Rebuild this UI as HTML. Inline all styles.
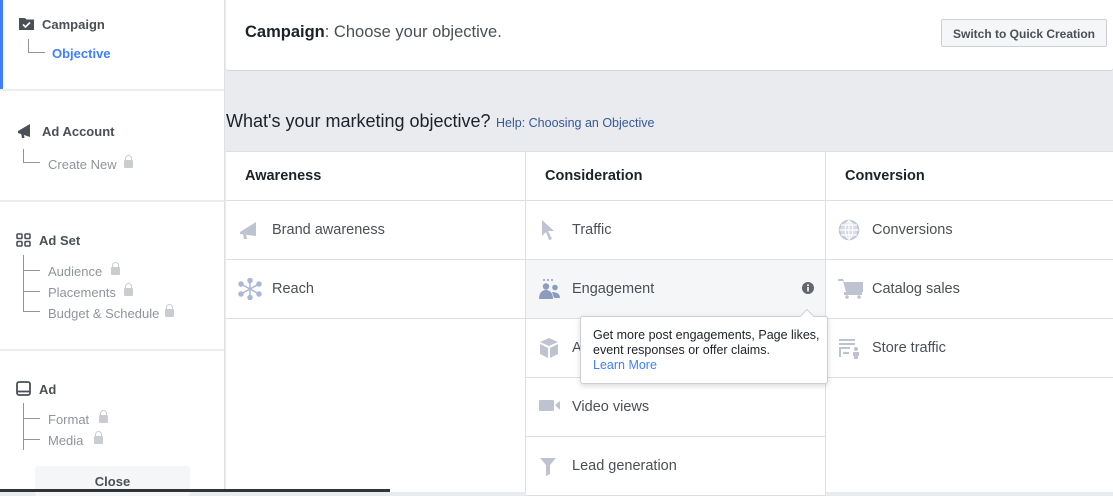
<!DOCTYPE html>
<html><head><style>
*{margin:0;padding:0;box-sizing:border-box}
body{width:1113px;height:492px;overflow:hidden;background:#e9ebee;font-family:"Liberation Sans",sans-serif;position:relative}
.a{position:absolute}
.side{left:0;top:0;width:225px;height:492px;background:#fff;border-right:1px solid #dddfe2}
.sep{left:0;width:224px;height:2px;background:#ebedf0}
.h{font-size:13px;font-weight:bold;color:#4b4f56}
.sub{font-size:13px;color:#90949c}
.tree{border-left:1px solid #90949c;width:1px}
.tl{border-top:1px solid #90949c;width:17px;height:1px}
.lock{width:9px;height:8px;background:#c9ccd1;border-radius:1px}
.lock:before{content:"";position:absolute;left:1px;top:-5px;width:5px;height:6px;border:1.5px solid #c9ccd1;border-bottom:none;border-radius:4px 4px 0 0}
.cell{background:#fff;border-right:1px solid #dddfe2;border-bottom:1px solid #dddfe2;font-size:14.5px;color:#4b4f56}
.cell span{position:absolute;left:46px;top:21px}
.hd{font-weight:bold;color:#1d2129}
.ic{position:absolute;left:12px;top:18px}
</style></head><body>
<div class="a side"></div>
<div class="a" style="left:0;top:0;width:3px;height:89px;background:#4080ff"></div>
<svg class="a" style="left:18px;top:16px" width="17" height="15"><path d="M1 2h6l1.5 1.5H16V14H1z" fill="#4b4f56"/><path d="M5 8.5l2.5 2.5L12 6.5" stroke="#fff" stroke-width="1.6" fill="none"/></svg>
<div class="a h" style="left:42px;top:17px">Campaign</div>
<div class="a tree" style="left:28px;top:39px;height:13px"></div><div class="a tl" style="left:28px;top:52px"></div>
<div class="a" style="left:52px;top:46px;font-size:13px;font-weight:bold;color:#4080ff">Objective</div>
<div class="a sep" style="top:89px"></div>
<svg class="a" style="left:17px;top:122px" width="18" height="17"><path d="M1 9l12-7v13L1 11z" fill="#4b4f56"/><path d="M4 11l1 5h2.5l-1-4.5z" fill="#4b4f56"/></svg>
<div class="a h" style="left:42px;top:124px">Ad Account</div>
<div class="a tree" style="left:23px;top:149px;height:13px"></div><div class="a tl" style="left:23px;top:162px"></div>
<div class="a sub" style="left:48px;top:157px">Create New</div><div class="a lock" style="left:124px;top:160px"></div>
<div class="a sep" style="top:200px"></div>
<svg class="a" style="left:16px;top:233px" width="15" height="14" fill="none" stroke="#4b4f56" stroke-width="1.6"><rect x="1" y="1" width="5" height="4.5" rx="1"/><rect x="9" y="1" width="5" height="4.5" rx="1"/><rect x="1" y="8.5" width="5" height="4.5" rx="1"/><rect x="9" y="8.5" width="5" height="4.5" rx="1"/></svg>
<div class="a h" style="left:39px;top:233px">Ad Set</div>
<div class="a tree" style="left:23px;top:255px;height:57px"></div>
<div class="a tl" style="left:23px;top:270px"></div><div class="a tl" style="left:23px;top:291px"></div><div class="a tl" style="left:23px;top:311px"></div>
<div class="a sub" style="left:48px;top:264px">Audience</div><div class="a lock" style="left:111px;top:267px"></div>
<div class="a sub" style="left:48px;top:285px">Placements</div><div class="a lock" style="left:124px;top:288px"></div>
<div class="a sub" style="left:48px;top:306px">Budget &amp; Schedule</div><div class="a lock" style="left:165px;top:309px"></div>
<div class="a sep" style="top:349px"></div>
<svg class="a" style="left:16px;top:381px" width="15" height="15" fill="none" stroke="#4b4f56" stroke-width="1.8"><rect x="1" y="1" width="13" height="13" rx="2"/><path d="M1 10.5h13"/></svg>
<div class="a h" style="left:39px;top:382px">Ad</div>
<div class="a tree" style="left:23px;top:403px;height:47px"></div>
<div class="a tl" style="left:23px;top:418px"></div><div class="a tl" style="left:23px;top:439px"></div>
<div class="a sub" style="left:48px;top:412px">Format</div><div class="a lock" style="left:99px;top:415px"></div>
<div class="a sub" style="left:48px;top:433px">Media</div><div class="a lock" style="left:94px;top:436px"></div>
<div class="a" style="left:35px;top:466px;width:155px;height:30px;background:#f5f6f7;border-radius:3px;font-size:13px;font-weight:bold;color:#4b4f56;text-align:center;padding-top:8px">Close</div>

<div class="a" style="left:226px;top:0;width:887px;height:71px;background:#fff;border-bottom:1px solid #d3d6db;border-radius:0 0 3px 3px"></div>
<div class="a" style="left:245px;top:23px;font-size:16.5px;color:#4b4f56"><b style="color:#1d2129">Campaign</b>: Choose your objective.</div>
<div class="a" style="left:941px;top:19px;width:166px;height:28px;background:#f5f6f7;border:1px solid #ccd0d5;border-radius:2px;font-size:12px;font-weight:bold;color:#4b4f56;text-align:center;padding-top:7px">Switch to Quick Creation</div>
<div class="a" style="left:226px;top:111px;font-size:18px;color:#1d2129">What's your marketing objective?</div>
<div class="a" style="left:496px;top:116px;font-size:12.5px;color:#365899">Help: Choosing an Objective</div>

<div class="a" style="left:226px;top:151px;width:887px;height:341px;background:#fff;border-top:1px solid #dddfe2"></div>
<div class="a cell hd" style="left:226px;top:152px;width:300px;height:49px"><span style="left:19px;top:16px">Awareness</span></div>
<div class="a cell hd" style="left:526px;top:152px;width:300px;height:49px"><span style="left:19px;top:16px">Consideration</span></div>
<div class="a cell hd" style="left:826px;top:152px;width:287px;height:49px;border-right:none"><span style="left:19px;top:16px">Conversion</span></div>
<div class="a" style="left:525px;top:152px;width:1px;height:340px;background:#dddfe2"></div>
<div class="a" style="left:825px;top:152px;width:1px;height:340px;background:#dddfe2"></div>

<div class="a cell" style="left:226px;top:201px;width:300px;height:59px"><svg class="ic" width="24" height="22"><path d="M2 13L18 3v14L2 15z" fill="#bec3d1"/><path d="M5 15l1 5h3l-1-5z" fill="#bec3d1"/></svg><span>Brand awareness</span></div>
<div class="a cell" style="left:226px;top:260px;width:300px;height:59px"><svg class="ic" width="24" height="22" stroke="#aab7d6" stroke-width="1.5" fill="#aab7d6"><path d="M12 11L12 2M12 11L12 20M12 11L3 6M12 11L21 6M12 11L3 16M12 11L21 16"/><circle cx="12" cy="2.5" r="2"/><circle cx="12" cy="19.5" r="2"/><circle cx="3" cy="6" r="2"/><circle cx="21" cy="6" r="2"/><circle cx="3" cy="16" r="2"/><circle cx="21" cy="16" r="2"/></svg><span>Reach</span></div>

<div class="a cell" style="left:526px;top:201px;width:300px;height:59px"><svg class="ic" width="20" height="22"><path d="M4 1l12 11h-6l4 8-3 1-3-8-4 4z" fill="#bec3d1"/></svg><span>Traffic</span></div>
<div class="a cell" style="left:526px;top:260px;width:300px;height:59px;background:#f5f6f7"><svg class="ic" width="24" height="24" fill="#8d9bbf"><circle cx="6" cy="2" r="1"/><circle cx="10" cy="2" r="1"/><circle cx="14" cy="2" r="1"/><circle cx="8" cy="8.5" r="3.2"/><circle cx="17" cy="9.5" r="2.8"/><path d="M1 21c0-6 3-9 7-9s7 3 7 9z"/><path d="M14 14c5 0 8 2 8 6h-6z"/></svg><span>Engagement</span><svg class="a" style="left:276px;top:22px" width="12" height="12"><circle cx="6" cy="6" r="6" fill="#606770"/><rect x="5.2" y="5" width="1.6" height="4.5" fill="#fff"/><circle cx="6" cy="3.2" r="1" fill="#fff"/></svg></div>
<div class="a cell" style="left:526px;top:319px;width:300px;height:59px"><svg class="ic" width="22" height="22" fill="#bec3d1"><path d="M11 1l9 4-9 4-9-4z"/><path d="M2 7l8 4v10l-8-4z"/><path d="M20 7l-8 4v10l8-4z"/></svg><span>App installs</span></div>
<div class="a cell" style="left:526px;top:378px;width:300px;height:59px"><svg class="ic" width="24" height="20" fill="#bec3d1"><rect x="1" y="4" width="15" height="11" rx="1"/><path d="M17 9l5-4v9z"/></svg><span>Video views</span></div>
<div class="a cell" style="left:526px;top:437px;width:300px;height:59px"><svg class="ic" width="22" height="22" fill="#bec3d1"><path d="M2 3h16l-6 7v9l-4 2V10z"/></svg><span>Lead generation</span></div>

<div class="a cell" style="left:826px;top:201px;width:287px;height:59px;border-right:none"><svg class="ic" width="22" height="22" fill="none" stroke="#bec3d1" stroke-width="1.6"><circle cx="11" cy="11" r="9.5" fill="#d6dbe6"/><path d="M1.5 11h19M11 1.5v19M3 6h16M3 16h16M11 1.5c-5 4-5 15 0 19M11 1.5c5 4 5 15 0 19" stroke="#fff" stroke-width="1.2"/></svg><span>Conversions</span></div>
<div class="a cell" style="left:826px;top:260px;width:287px;height:59px;border-right:none"><svg class="ic" width="26" height="22" fill="#bec3d1"><path d="M0 1h5l1 3h19v10H8L5 3H0z"/><rect x="6" y="14" width="18" height="3"/><circle cx="9" cy="19" r="1.8"/><circle cx="21" cy="19" r="1.8"/></svg><span>Catalog sales</span></div>
<div class="a cell" style="left:826px;top:319px;width:287px;height:59px;border-right:none"><svg class="ic" width="24" height="22" fill="#bec3d1"><rect x="1" y="2" width="16" height="2"/><rect x="1" y="6" width="16" height="2"/><rect x="1" y="10" width="2" height="10"/><rect x="1" y="10" width="11" height="2"/><rect x="5" y="15" width="6" height="2"/><circle cx="18" cy="12" r="2"/><path d="M15 15h6v4h-1v3h-4v-3h-1z"/></svg><span>Store traffic</span></div>

<div class="a" style="left:580px;top:316px;width:248px;height:68px;background:#fff;border:1px solid #ccd0d5;border-radius:3px;box-shadow:0 2px 6px rgba(0,0,0,.15);font-size:12.5px;color:#1d2129;line-height:15px;padding:11px 0 0 12px">Get more post engagements, Page likes,<br>event responses or offer claims.<br><span style="color:#4080ff">Learn More</span></div>
<div class="a" style="left:802px;top:311px;width:10px;height:10px;background:#fff;border-left:1px solid #ccd0d5;border-top:1px solid #ccd0d5;transform:rotate(45deg)"></div>
<div class="a" style="left:0;top:489px;width:390px;height:3px;background:#333;z-index:5"></div>
</body></html>
